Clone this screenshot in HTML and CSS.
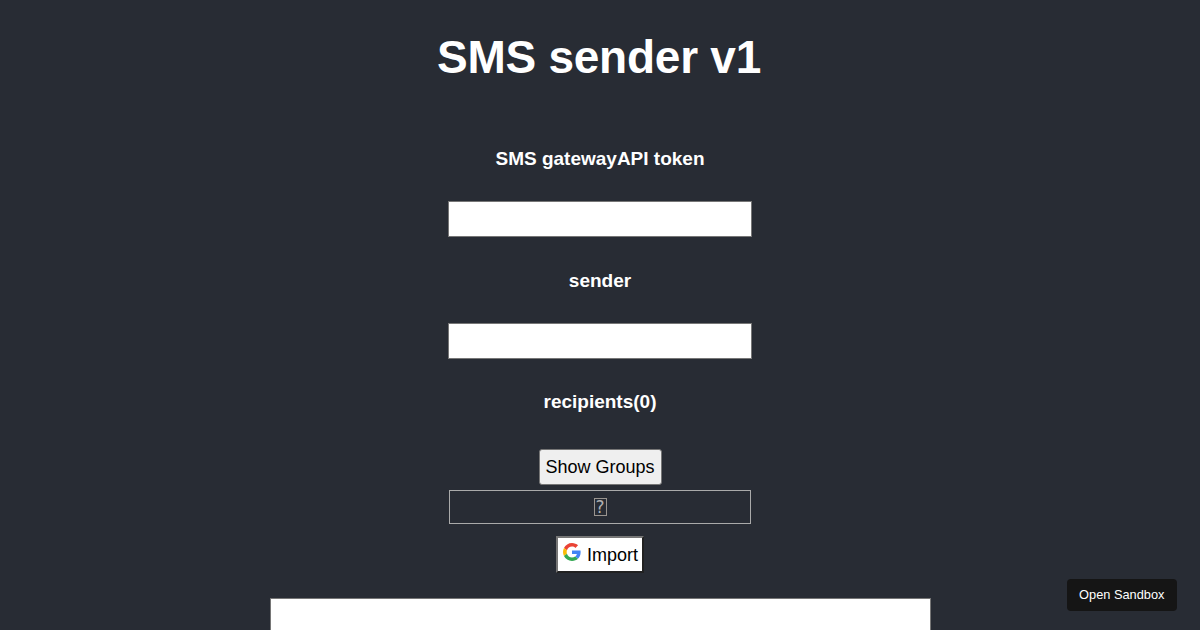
FILE: index.html
```html
<!DOCTYPE html>
<html lang="en">
<head>
    <meta charset="UTF-8">
    <meta name="viewport" content="width=device-width, initial-scale=1.0">
    <title>SMS sender v1</title>
    <link rel="stylesheet" href="styles.css">
</head>
<body>

    <div class="app">
        <h1 class="title">SMS sender v1</h1>

        <h3 class="label label-first">SMS gatewayAPI token</h3>
        <input class="field" type="text">

        <h3 class="label">sender</h3>
        <input class="field" type="text">

        <h3 class="label">recipients(0)</h3>
        <button class="groups-btn">Show Groups</button>

        <div class="dropzone"><span class="broken-icon">?</span></div>

        <button class="import-btn">
            <svg class="google-icon" viewBox="0 0 48 48" width="18" height="18">
                <path fill="#EA4335" d="M24 9.5c3.54 0 6.71 1.22 9.21 3.6l6.85-6.85C35.9 2.38 30.47 0 24 0 14.62 0 6.51 5.38 2.56 13.22l7.98 6.19C12.43 13.72 17.74 9.5 24 9.5z"/>
                <path fill="#4285F4" d="M46.98 24.55c0-1.57-.15-3.09-.38-4.55H24v9.02h12.94c-.58 2.96-2.26 5.48-4.78 7.18l7.73 6c4.51-4.18 7.09-10.36 7.09-17.65z"/>
                <path fill="#FBBC05" d="M10.53 28.59c-.48-1.45-.76-2.99-.76-4.59s.27-3.14.76-4.59l-7.98-6.19C.92 16.46 0 20.12 0 24c0 3.88.92 7.54 2.56 10.78l7.97-6.19z"/>
                <path fill="#34A853" d="M24 48c6.48 0 11.93-2.13 15.89-5.81l-7.73-6c-2.15 1.45-4.92 2.3-8.16 2.3-6.26 0-11.57-4.22-13.47-9.91l-7.98 6.19C6.51 42.62 14.62 48 24 48z"/>
            </svg>
            Import
        </button>

        <textarea class="message"></textarea>
    </div>

    <a class="sandbox-btn" href="#">Open Sandbox</a>

</body>
</html>
```

FILE: styles.css
```css
html, body {
    height: 100%;
    overflow: hidden;
}

body {
    font-family: "Liberation Sans", Arial, sans-serif;
    margin: 0;
    padding: 0;
    background-color: #282c34;
    color: #fff;
}

.app {
    display: flex;
    flex-direction: column;
    align-items: center;
}

.title {
    font-size: 46px;
    font-weight: bold;
    line-height: 55px;
    letter-spacing: -0.25px;
    margin: 30px 0 0;
    padding-right: 2px;
}

.label {
    font-size: 19px;
    font-weight: bold;
    line-height: 21.5px;
    margin: 32.2px 0 31.8px;
}

.label-first {
    margin-top: 63.1px;
}

.field {
    box-sizing: border-box;
    width: 304px;
    height: 36px;
    margin: 0;
    border: 1px solid #767676;
    background-color: #fff;
}

.groups-btn {
    box-sizing: border-box;
    width: 123px;
    height: 36px;
    margin: 4.7px 0 0;
    padding: 0;
    font-family: inherit;
    font-size: 18px;
    color: #000;
    background-color: #efefef;
    border: 1px solid #767676;
    border-radius: 3px;
}

.dropzone {
    box-sizing: border-box;
    width: 302px;
    height: 34px;
    margin-top: 5px;
    border: 1px solid #aaa;
    display: flex;
    justify-content: center;
    align-items: center;
}

.broken-icon {
    box-sizing: border-box;
    width: 13px;
    height: 18px;
    border: 1px solid #9a9590;
    font-family: "DejaVu Sans", sans-serif;
    font-size: 17px;
    line-height: 16px;
    text-align: center;
    color: #b0b0b0;
}

.import-btn {
    box-sizing: border-box;
    display: flex;
    align-items: center;
    gap: 6px;
    height: 37px;
    margin-top: 12px;
    padding: 2px 4px 0 5px;
    font-family: inherit;
    font-size: 18px;
    color: #000;
    background-color: #fff;
    border: 2px outset #767676;
}

.google-icon {
    margin-top: -7px;
}

.message {
    box-sizing: border-box;
    display: block;
    width: 661px;
    height: 200px;
    margin: 25px 0 0 1px;
    border: 1px solid #767676;
    background-color: #fff;
}

.sandbox-btn {
    position: fixed;
    right: 23px;
    bottom: 19px;
    padding: 0 12.5px;
    height: 32px;
    line-height: 32px;
    font-size: 12.8px;
    color: #fff;
    text-decoration: none;
    background-color: #151515;
    border-radius: 4px;
}
```
